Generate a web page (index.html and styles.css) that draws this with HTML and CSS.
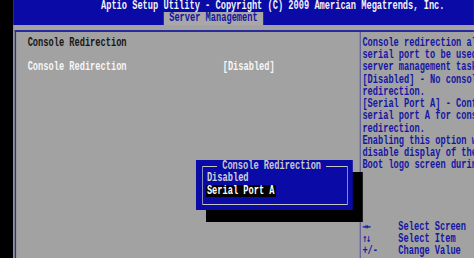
FILE: index.html
```html
<!DOCTYPE html>
<html lang="en">
<head>
<meta charset="utf-8">
<title>Aptio Setup Utility</title>
<link rel="stylesheet" href="styles.css">
</head>
<body>
<div class="screen">
  <div class="strip"></div>
  <div class="main">
    <header class="header">
      <div class="title">Aptio Setup Utility - Copyright (C) 2009 American Megatrends, Inc.</div>
      <div class="tabs"><span class="tab">Server Management</span></div>
    </header>
    <div class="body">
      <div class="frame">
        <section class="left">
          <div class="heading">Console Redirection</div>
          <div class="item"><span>Console Redirection</span><span>[Disabled]</span></div>
        </section>
        <aside class="right">
          <div class="help">
            <div>Console redirection allows a</div>
            <div>serial port to be used for</div>
            <div>server management tasks.</div>
            <div>[Disabled] - No console</div>
            <div>redirection.</div>
            <div>[Serial Port A] - Configure</div>
            <div>serial port A for console</div>
            <div>redirection.</div>
            <div>Enabling this option will</div>
            <div>disable display of the</div>
            <div>Boot logo screen during POST.</div>
          </div>
          <div class="keys">
            <span class="key arrows">→←</span><span>Select Screen</span>
            <span class="key arrows">↑↓</span><span>Select Item</span>
            <span class="key">+/-</span><span>Change Value</span>
          </div>
        </aside>
      </div>
    </div>
  </div>
  <div class="popup">
    <fieldset class="options">
      <legend class="options-title">Console Redirection</legend>
      <div class="option">Disabled</div>
      <div class="option"><span class="selected">Serial Port A</span></div>
    </fieldset>
  </div>
</div>
</body>
</html>
```

FILE: styles.css
```css
html, body {
  margin: 0;
  padding: 0;
  overflow: hidden;
  background: #a2a2a2;
}

.screen {
  position: relative;
  width: 677.14px;
  height: 258px;
  transform: scaleX(0.7);
  transform-origin: 0 0;
  display: flex;
  font-family: "Liberation Mono", "DejaVu Sans Mono", monospace;
  font-size: 12.4px;
  font-weight: bold;
  line-height: 12.25px;
  white-space: nowrap;
  overflow: hidden;
}

.strip {
  flex: none;
  width: 18.57px;
  background: #000;
}

.main {
  flex: 1;
  min-width: 0;
  display: flex;
  flex-direction: column;
}

.header {
  background: #0a0aa6;
  color: #f2f2f2;
}

.title {
  height: 12.25px;
  padding-left: 125.7px;
}

.tabs {
  height: 12.25px;
  padding-left: 215.7px;
}

.tab {
  display: inline-block;
  vertical-align: top;
  padding: 0 7.43px;
  background: #a8a8a8;
  color: #1414a0;
}

.body {
  flex: 1;
  background: #a2a2a2;
  padding: 5.5px 0 0 2.86px;
  min-height: 0;
}

.frame {
  height: 100%;
  box-sizing: border-box;
  border-top: 2px solid #2a2a9c;
  border-left: 2.5px solid #2a2a9c;
  display: grid;
  grid-template-columns: 490.4px 1fr;
}

.left {
  padding: 4.75px 0 0 16.1px;
}

.heading {
  color: #161616;
}

.item {
  display: grid;
  grid-template-columns: 278.6px auto;
  margin-top: 12.25px;
  color: #f6f6f6;
}

.right {
  border-left: 1.43px solid #2a2a9c;
  padding: 4.75px 0 0 2.9px;
  color: #1616a2;
  overflow: hidden;
}

.keys {
  margin-top: 49px;
  display: grid;
  grid-template-columns: 51.4px 1fr;
}

.key {
  line-height: 12.25px;
}

.arrows {
  font-family: "DejaVu Sans Mono", monospace;
  font-size: 11px;
  letter-spacing: -1px;
}

.popup {
  position: absolute;
  left: 280px;
  top: 160px;
  width: 224.3px;
  height: 50px;
  box-sizing: border-box;
  padding: 0 7px 0 8.6px;
  background: #0a0aa6;
  box-shadow: 14.3px 12px 0 #000;
}

.options {
  margin: 0;
  padding: 0 0 0 6px;
  height: 45px;
  box-sizing: border-box;
  border: 1px solid #c4c4c4;
  min-width: 0;
}

.options-title {
  padding: 0 7.43px;
  margin-left: 14.4px;
  color: #c8c8c8;
  line-height: 12.25px;
}

.option {
  color: #d2d2d2;
}

.selected {
  display: inline-block;
  vertical-align: top;
  background: #000;
  color: #fff;
  padding: 0 2px;
  margin-left: -2px;
}
```
